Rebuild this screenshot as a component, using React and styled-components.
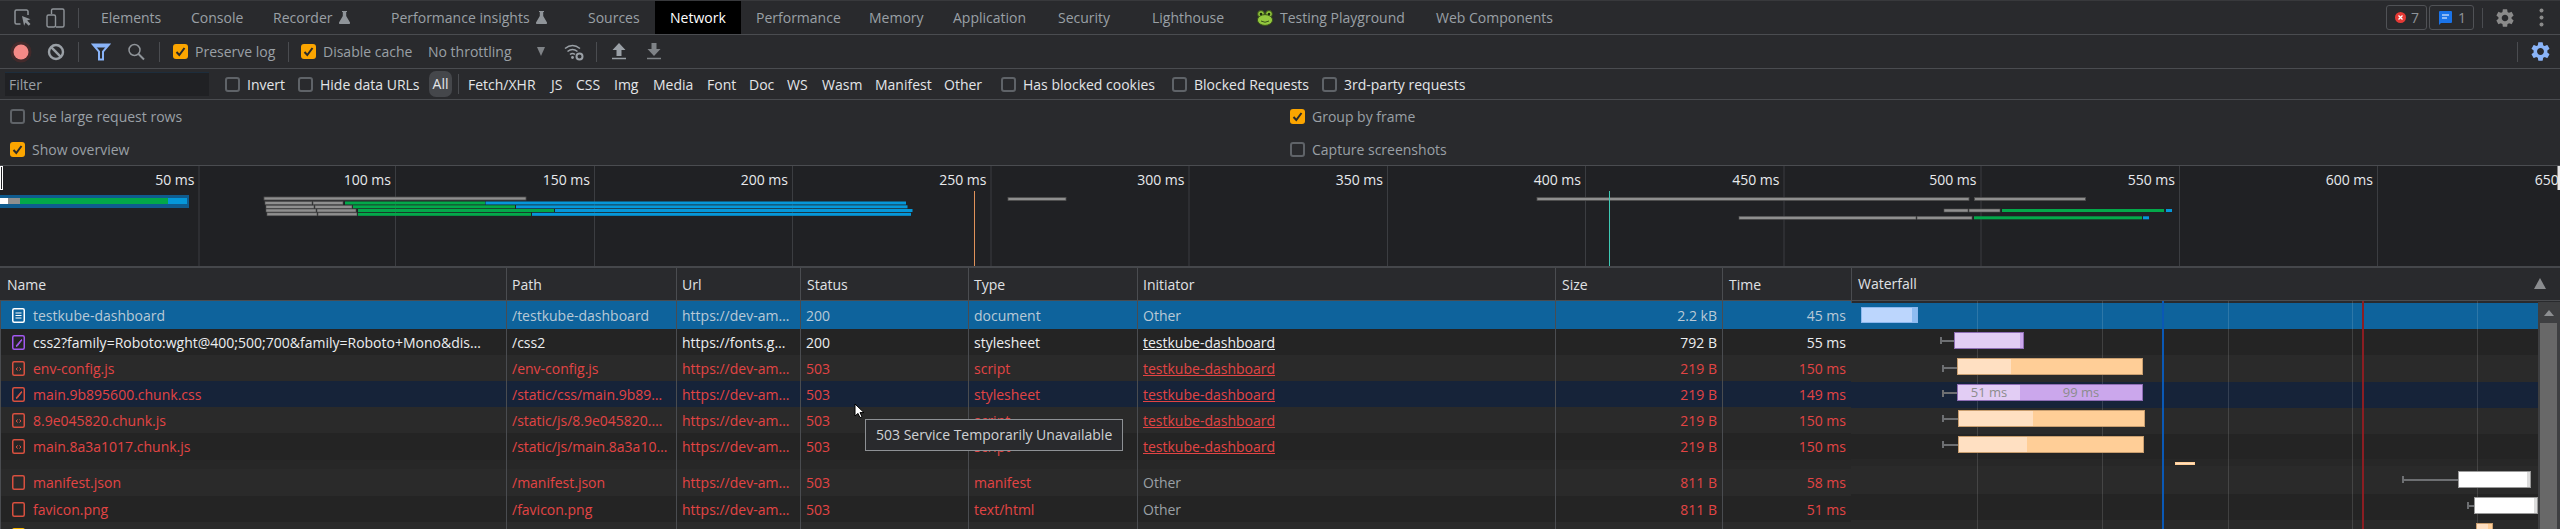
import React from 'react';
import styled, { createGlobalStyle } from 'styled-components';

const FONT = '"Open Sans", "Noto Sans", "Liberation Sans", sans-serif';
const LINE = '#4a4c50';
const RED = '#e24444';

const Global = createGlobalStyle`
  html, body { margin: 0; padding: 0; background: #292a2d; }
  #root { width: 2560px; height: 529px; overflow: hidden; }
  * { box-sizing: border-box; }
`;

const Page = styled.div`
  position: relative;
  width: 2560px;
  height: 529px;
  overflow: hidden;
  background: #292a2d;
  font-family: ${FONT};
  font-size: 14px;
  color: #9aa0a6;
`;
const Bar = styled.div`
  display: flex;
  align-items: center;
  height: ${p => p.$h}px;
  border-bottom: 1px solid ${LINE};
  white-space: nowrap;
`;
const TabBarRow = styled(Bar)`
  border-top: 1px solid #38393c;
`;
const Slot = styled.div`
  flex: none;
  width: ${p => p.$w}px;
  margin-left: ${p => p.$ml || 0}px;
  display: flex;
  align-items: center;
  justify-content: center;
`;
const Sep = styled.div`
  flex: none;
  width: 1px;
  height: 20px;
  margin-left: ${p => p.$ml || 0}px;
  background: ${LINE};
`;
const Tab = styled.div`
  flex: none;
  display: flex;
  align-items: center;
  gap: ${p => p.$gap || 6}px;
  width: ${p => p.$w}px;
  height: 33px;
  padding-left: ${p => p.$pl ?? 15}px;
  color: ${p => (p.$active ? '#fff' : '#9aa0a6')};
  background: ${p => (p.$active ? '#000' : 'transparent')};
`;
const Pushed = styled.div`
  margin-left: auto;
  display: flex;
  align-items: center;
`;
const Badge = styled.div`
  display: flex;
  align-items: center;
  width: ${p => p.$w}px;
  height: 25px;
  margin-right: ${p => p.$mr || 0}px;
  padding-left: ${p => p.$pl}px;
  gap: ${p => p.$gap}px;
  border: 1px solid #505256;
  border-radius: 3px;
  color: #8f9499;
`;
const CheckItem = styled.label`
  flex: none;
  display: flex;
  align-items: center;
  gap: 7px;
  width: ${p => (p.$w ? `${p.$w}px` : 'auto')};
  margin-left: ${p => p.$ml || 0}px;
  color: ${p => p.$c || '#9aa0a6'};
`;
const Box = styled.span`
  flex: none;
  width: 15px;
  height: 15px;
  display: flex;
  align-items: center;
  justify-content: center;
  border-radius: 3px;
  background: ${p => (p.$on ? '#fba500' : 'transparent')};
  border: ${p => (p.$on ? 'none' : '2px solid #5f6368')};
`;
const Throttle = styled.div`
  flex: none;
  width: 106px;
  margin-left: ${p => p.$ml || 0}px;
  color: #9aa0a6;
`;
const Caret = styled.div`
  flex: none;
  width: 0;
  height: 0;
  margin-left: 3px;
  border-left: 4.5px solid transparent;
  border-right: 4.5px solid transparent;
  border-top: 9px solid #7f8387;
`;
const FilterInput = styled.div`
  flex: none;
  width: 204px;
  height: 24px;
  margin: 0 16px 0 5px;
  padding-left: 4px;
  line-height: 23px;
  background: #202124;
  border-top: 1px solid #1d2d3c;
  color: #9aa0a6;
`;
const Pill = styled.div`
  flex: none;
  width: 23px;
  height: 26px;
  line-height: 26px;
  text-align: center;
  border-radius: 7px;
  background: #45474b;
  color: #e3e5e8;
  margin-left: ${p => p.$ml || 0}px;
`;
const TypeFilter = styled.div`
  flex: none;
  width: ${p => p.$w}px;
  color: #e3e5e8;
`;
const Settings = styled.div`
  display: grid;
  grid-template-columns: 1280px auto;
  grid-auto-rows: 33px;
  align-items: center;
  height: 66px;
  padding-left: 10px;
  border-bottom: 1px solid ${LINE};
`;
const Overview = styled.svg`
  display: block;
  width: 2560px;
  height: 102px;
  border-bottom: 2px solid #45474b;
  background: #202124;
  font-family: ${FONT};
  font-size: 14px;
`;
const Columns = styled.div`
  display: grid;
  grid-template-columns: 507px 170px 124px 168px 169px 418px 167px 129px;
`;
const HeaderRow = styled.div`
  display: flex;
  height: 33px;
  border-bottom: 1px solid ${LINE};
  color: #e0e2e5;
`;
const HeadCell = styled.div`
  flex: none;
  display: flex;
  align-items: center;
  width: ${p => p.$w}px;
  height: 100%;
  padding-left: ${p => p.$pl || 5}px;
  border-right: 1px solid ${LINE};
`;
const WaterHead = styled.div`
  flex: 1;
  display: flex;
  align-items: center;
  justify-content: space-between;
  padding: 0 14px 2px 6px;
`;
const SortUp = styled.div`
  width: 0;
  height: 0;
  border-left: 6px solid transparent;
  border-right: 6px solid transparent;
  border-bottom: 11px solid #8a8c8f;
`;
const TableBody = styled.div`
  display: flex;
  height: 228px;
`;
const LeftRows = styled.div`
  flex: none;
  width: 1851px;
`;
const Row = styled(Columns)`
  height: ${p => p.$h}px;
  background: ${p => p.$bg};
  color: ${p => p.$c};
`;
const Cell = styled.div`
  display: flex;
  align-items: center;
  justify-content: ${p => (p.$right ? 'flex-end' : 'flex-start')};
  min-width: 0;
  padding: 0 5px;
  overflow: hidden;
  white-space: nowrap;
  border-right: 1px solid ${LINE};
`;
const NameCell = styled(Cell)`
  padding-left: 11px;
  gap: 8px;
  border-left: 1px solid ${LINE};
`;
const Link = styled.span`
  text-decoration: underline;
`;
const Faded = styled.span`
  color: #9aa0a6;
`;
const WaterColumn = styled.div`
  position: relative;
  flex: none;
  width: 687px;
  overflow: hidden;
  padding-top: 2px;
`;
const Stripe = styled.div`
  height: ${p => p.$h}px;
  background: ${p => p.$bg};
`;
const GridLine = styled.div`
  position: absolute;
  top: 0;
  bottom: 0;
  left: ${p => p.$x - 1851}px;
  width: ${p => p.$wd || 1}px;
  background: ${p => p.$c};
`;
const Span = styled.div`
  position: absolute;
  left: ${p => p.$x - 1851}px;
  top: ${p => p.$y - 301}px;
  width: ${p => p.$w}px;
  height: ${p => p.$h || 17}px;
  display: flex;
  border: 1px solid ${p => p.$b};
  overflow: hidden;
`;
const Seg = styled.div`
  flex: ${p => (p.$w ? `0 0 ${p.$w}px` : '1')};
  background: ${p => p.$c};
  color: #8c8c8c;
  font-size: 13px;
  line-height: 15px;
  text-align: center;
`;
const Whisker = styled.div`
  position: absolute;
  left: ${p => p.$x - 1851}px;
  top: ${p => p.$y - 301 - 3}px;
  width: ${p => p.$w}px;
  height: 7px;
  border-left: 2px solid #6d6f72;
  &::after {
    content: '';
    display: block;
    margin-top: 2.5px;
    height: 2px;
    background: #6d6f72;
  }
`;
const Scroll = styled.div`
  flex: none;
  width: 22px;
  height: 228px;
  margin-top: 1px;
  background: #3e3f41;
  padding-left: 2px;
`;
const ScrollUp = styled.div`
  height: 21px;
  display: flex;
  align-items: center;
  justify-content: center;
  padding-right: 3px;
  &::before {
    content: '';
    border-left: 5px solid transparent;
    border-right: 5px solid transparent;
    border-bottom: 6px solid #8d8f91;
  }
`;
const Thumb = styled.div`
  width: 17px;
  height: 206px;
  background: #686868;
`;
const Tooltip = styled.div`
  position: absolute;
  left: 865px;
  top: 419px;
  width: 258px;
  height: 32px;
  padding-left: 10px;
  line-height: 30px;
  background: #292a2d;
  border: 1px solid #8d9094;
  color: #d0d2d5;
  white-space: nowrap;
`;
const Cursor = styled.svg`
  position: absolute;
  left: 854px;
  top: 403px;
`;
const InlineIcon = styled.svg`
  flex: none;
`;

const GEAR = 'M19.14 12.94c.04-.3.06-.61.06-.94 0-.32-.02-.64-.07-.94l2.03-1.58a.49.49 0 0 0 .12-.61l-1.92-3.32a.488.488 0 0 0-.59-.22l-2.39.96c-.5-.38-1.03-.7-1.62-.94l-.36-2.54a.484.484 0 0 0-.48-.41h-3.84c-.24 0-.43.17-.47.41l-.36 2.54c-.59.24-1.13.57-1.62.94l-2.39-.96c-.22-.08-.47 0-.59.22L2.74 8.87c-.12.21-.08.47.12.61l2.03 1.58c-.05.3-.09.63-.09.94s.02.64.07.94l-2.03 1.58a.49.49 0 0 0-.12.61l1.92 3.32c.12.22.37.29.59.22l2.39-.96c.5.38 1.03.7 1.62.94l.36 2.54c.05.24.24.41.48.41h3.84c.24 0 .44-.17.47-.41l.36-2.54c.59-.24 1.13-.56 1.62-.94l2.39.96c.22.08.47 0 .59-.22l1.92-3.32c.12-.22.07-.47-.12-.61l-2.01-1.58zM12 15.6c-1.98 0-3.6-1.62-3.6-3.6s1.62-3.6 3.6-3.6 3.6 1.62 3.6 3.6-1.62 3.6-3.6 3.6z';

const Gear = ({ color, size = 24 }) => (
  <svg width={size} height={size} viewBox="0 0 24 24"><path fill={color} d={GEAR} /></svg>
);
const Flask = () => (
  <svg width="11" height="13" viewBox="0 0 11 13">
    <path fill="#8f9499" d="M3 0h5v1h-.8v4L11 11.4a1 1 0 0 1-.9 1.6H.9A1 1 0 0 1 0 11.4L3.8 5V1H3z" />
  </svg>
);
const Frog = () => (
  <svg width="18" height="16" viewBox="0 0 18 16">
    <circle cx="5" cy="4" r="3.4" fill="#93c83e" stroke="#39511a" strokeWidth="1" />
    <circle cx="13" cy="4" r="3.4" fill="#93c83e" stroke="#39511a" strokeWidth="1" />
    <ellipse cx="9" cy="10" rx="7.6" ry="5.4" fill="#93c83e" stroke="#39511a" strokeWidth="1" />
    <circle cx="5" cy="4" r="1.3" fill="#1d2a0c" />
    <circle cx="13" cy="4" r="1.3" fill="#1d2a0c" />
    <path d="M5 11q4 2.5 8 0" stroke="#39511a" strokeWidth="1" fill="none" />
  </svg>
);
const Check = ({ on }) => (
  <Box $on={on}>
    {on && (
      <svg width="11" height="11" viewBox="0 0 11 11">
        <path d="M1.5 6l2.8 3L9.5 2" fill="none" stroke="#2a2a2a" strokeWidth="2" />
      </svg>
    )}
  </Box>
);
const Checked = ({ on, label, w, ml, c }) => (
  <CheckItem $w={w} $ml={ml} $c={c}>
    <Check on={on} />
    {label}
  </CheckItem>
);

const FileIcon = ({ kind, color }) => {
  const glyph = {
    doc: <path d="M3.5 5h6M3.5 7.5h6M3.5 10h6" stroke={color} strokeWidth="1.2" />,
    css: <path d="M4 11l5.5-6.5L10 5l-5 6.5z" fill={color} stroke={color} strokeWidth="1" />,
    js: <path d="M5.8 6.5L4 8l1.8 1.5M7.4 6.5L9 8l-1.6 1.5" fill="none" stroke={color} strokeWidth="1" />,
    blank: null,
  }[kind];
  return (
    <InlineIcon width="13" height="15" viewBox="0 0 13 15">
      <rect x="0.75" y="0.75" width="11.5" height="13.5" rx="1.5" fill="none" stroke={color} strokeWidth="1.5" />
      {glyph}
    </InlineIcon>
  );
};

const tabs = [
  { label: 'Elements', w: 90 },
  { label: 'Console', w: 82 },
  { label: 'Recorder', w: 118, flask: true },
  { label: 'Performance insights', w: 197, flask: true },
  { label: 'Sources', w: 82 },
  { label: 'Network', w: 86, active: true },
  { label: 'Performance', w: 113 },
  { label: 'Memory', w: 84 },
  { label: 'Application', w: 105 },
  { label: 'Security', w: 94 },
  { label: 'Lighthouse', w: 103 },
  { label: 'Testing Playground', w: 181, frog: true },
  { label: 'Web Components', w: 150 },
];
const typeFilters = [
  ['Fetch/XHR', 83], ['JS', 25], ['CSS', 38], ['Img', 39], ['Media', 54], ['Font', 42],
  ['Doc', 38], ['WS', 35], ['Wasm', 53], ['Manifest', 69], ['Other', 57],
];
const TICKS = [198.5, 395, 594, 792, 990.5, 1188.5, 1387, 1585, 1783.5, 1980.5, 2179, 2377];

const GRAY = '#8f8f8f', GREEN = '#03a84a', BLUE = '#0597d9';
const track = (y, parts) =>
  parts.map(([a, b, c], i) => <rect key={`${y}-${i}`} x={a} y={y} width={b - a} height={3} fill={c} stroke={c === GRAY ? '#4e4e4e' : '#17351f'} strokeWidth={c === GRAY ? 0.6 : 0} />);

const OverviewChart = () => (
  <Overview viewBox="0 166 2560 100" preserveAspectRatio="none">
    {TICKS.map(x => <rect key={x} x={x} y="166" width="1" height="100" fill="#3b3d41" />)}
    {[...TICKS, 2586].map((x, i) => (
      <text key={x} x={x - 4} y="185" textAnchor="end" fill="#e8eaed">{(i + 1) * 50} ms</text>
    ))}
    <rect x="0" y="195" width="189" height="13" fill="#0f5c8f" />
    <rect x="0" y="198" width="8" height="6" fill="#fff" />
    <rect x="8" y="198" width="12" height="6" fill={GRAY} />
    <rect x="20" y="198" width="148" height="6" fill={GREEN} />
    <rect x="168" y="198" width="19" height="6" fill={BLUE} />
    <rect x="264" y="197" width="262" height="3" fill={GRAY} stroke="#4e4e4e" strokeWidth="0.8" />
    {track(201.5, [[265, 312, GRAY], [313, 343, GRAY], [345, 485, GREEN], [485.5, 906, BLUE]])}
    {track(205.3, [[266, 314, GRAY], [315, 352, GRAY], [353, 515, GREEN], [516, 907.5, BLUE]])}
    {track(209, [[266, 316, GRAY], [317, 356, GRAY], [358, 554, GREEN], [555, 912.5, BLUE]])}
    {track(212.8, [[267, 317, GRAY], [318, 357, GRAY], [358, 531, GREEN], [532, 911, BLUE]])}
    <rect x="1008" y="197.5" width="58" height="3" fill={GRAY} stroke="#4e4e4e" strokeWidth="0.8" />
    <rect x="1537" y="197.5" width="432" height="3" fill={GRAY} stroke="#4e4e4e" strokeWidth="0.8" />
    <rect x="1974.5" y="197.5" width="111" height="3" fill={GRAY} stroke="#4e4e4e" strokeWidth="0.8" />
    {track(209, [[1944, 1968, GRAY], [1969, 2000, GRAY], [2002, 2164, GREEN], [2166, 2172, BLUE]])}
    {track(216.3, [[1739, 1916, GRAY], [1917, 1972, GRAY], [1974, 2142, GREEN], [2143, 2149, BLUE]])}
    <rect x="974" y="191" width="1" height="75" fill="#e0925a" />
    <rect x="1609" y="191" width="1" height="75" fill="#3fc9b4" />
    <path d="M0 166h3v24H0z" fill="#fff" />
    <path d="M1 167h1v22H1z" fill="#202124" />
    <rect x="2557.5" y="166" width="2.5" height="24" fill="#e8e8e8" />
  </Overview>
);

const SEL = { bg: '#0e639c', c: '#b9c9d6' };
const DARK = '#242424', LIGHT = '#2a2a2a', HOVER = '#162339';
const DOTS = 'https://dev-am…';
const rows = [
  { h: 28, ...SEL, kind: 'doc', ic: '#fff', name: 'testkube-dashboard', path: '/testkube-dashboard', url: DOTS, st: '200', type: 'document', init: 'Other', size: '2.2 kB', time: '45 ms' },
  { h: 26, bg: DARK, c: '#eceef0', kind: 'css', ic: '#a259f0', name: 'css2?family=Roboto:wght@400;500;700&family=Roboto+Mono&dis…', path: '/css2', url: 'https://fonts.g…', st: '200', type: 'stylesheet', link: true, size: '792 B', time: '55 ms' },
  { h: 26, bg: LIGHT, c: RED, kind: 'js', ic: '#d8503f', name: 'env-config.js', path: '/env-config.js', url: DOTS, st: '503', type: 'script', link: true, size: '219 B', time: '150 ms' },
  { h: 26, bg: HOVER, c: RED, kind: 'css', ic: '#d8503f', name: 'main.9b895600.chunk.css', path: '/static/css/main.9b89…', url: DOTS, st: '503', type: 'stylesheet', link: true, size: '219 B', time: '149 ms' },
  { h: 26, bg: LIGHT, c: RED, kind: 'js', ic: '#d8503f', name: '8.9e045820.chunk.js', path: '/static/js/8.9e045820.…', url: DOTS, st: '503', type: 'script', link: true, size: '219 B', time: '150 ms' },
  { h: 27, bg: DARK, c: RED, kind: 'js', ic: '#d8503f', name: 'main.8a3a1017.chunk.js', path: '/static/js/main.8a3a10…', url: DOTS, st: '503', type: 'script', link: true, size: '219 B', time: '150 ms' },
  { h: 9, bg: '#272727' },
  { h: 27, bg: LIGHT, c: RED, kind: 'blank', ic: '#d8503f', name: 'manifest.json', path: '/manifest.json', url: DOTS, st: '503', type: 'manifest', other: true, size: '811 B', time: '58 ms' },
  { h: 26, bg: DARK, c: RED, kind: 'blank', ic: '#d8503f', name: 'favicon.png', path: '/favicon.png', url: DOTS, st: '503', type: 'text/html', other: true, size: '811 B', time: '51 ms' },
  { h: 26, bg: LIGHT, c: RED, kind: 'blank', ic: '#f5b400' },
];
const stripes = [
  [26, SEL.bg], [26, DARK], [26.5, LIGHT], [26, HOVER], [26, LIGHT], [25.5, DARK], [7, '#272727'], [27.5, LIGHT], [26, DARK], [10, LIGHT],
];
const headers = [
  ['Name', 507, 7], ['Path', 170], ['Url', 124], ['Status', 168, 6], ['Type', 169], ['Initiator', 418], ['Size', 167, 6], ['Time', 129, 6],
];
const ORANGE = ['#ffe0c2', '#ffce97', '#c99e6f'];
const PURPLE = ['#e2cdf4', '#cba7ec', '#8e6db5'];
const BRIGHT = '#e3e5e8';

const App = () => (
  <Page>
    <Global />
    <TabBarRow $h={35}>
      <Slot $w={14} />
      <InlineIcon width="18" height="18" viewBox="0 0 18 18">
        <path d="M6.5 15H2.5A1.5 1.5 0 0 1 1 13.5v-11A1.5 1.5 0 0 1 2.5 1h10A1.5 1.5 0 0 1 14 2.5V6" fill="none" stroke="#8f9499" strokeWidth="1.5" />
        <path d="M8 7l8.5 3.2-3.3 1.4 3.3 3.3-1.8 1.8-3.2-3.3-1.4 3.3z" fill="#8f9499" />
      </InlineIcon>
      <Slot $w={14} />
      <InlineIcon width="19" height="20" viewBox="0 0 19 20">
        <path d="M5.5 6V2.5A1.5 1.5 0 0 1 7 1h9.5A1.5 1.5 0 0 1 18 2.5v15a1.5 1.5 0 0 1-1.5 1.5H10" fill="none" stroke="#8f9499" strokeWidth="1.4" />
        <rect x="1" y="7" width="8.5" height="12" rx="1.5" fill="none" stroke="#8f9499" strokeWidth="1.4" />
      </InlineIcon>
      <Sep $ml={13} />
      <Slot $w={7} />
      {tabs.map(t => (
        <Tab key={t.label} $w={t.w} $active={t.active} $pl={t.frog ? 16 : 15}>
          {t.frog && <Frog />}
          {t.label}
          {t.flask && <Flask />}
        </Tab>
      ))}
      <Pushed>
        <Badge $w={41} $mr={2} $pl={8} $gap={5}>
          <svg width="11" height="11" viewBox="0 0 11 11">
            <circle cx="5.5" cy="5.5" r="5.5" fill="#e53935" />
            <path d="M3.5 3.5l4 4M7.5 3.5l-4 4" stroke="#fff" strokeWidth="1.3" />
          </svg>
          7
        </Badge>
        <Badge $w={45} $pl={9} $gap={6}>
          <svg width="13" height="14" viewBox="0 0 13 14">
            <path d="M0 1a1 1 0 0 1 1-1h11a1 1 0 0 1 1 1v10a1 1 0 0 1-1 1H2l-2 2z" fill="#1a73e8" />
            <path d="M3 4h7M3 7h5" stroke="#fff" strokeWidth="1.2" />
          </svg>
          1
        </Badge>
        <Sep $ml={8} />
        <Slot $w={30} $ml={7}><Gear color="#8a8a8a" size={22} /></Slot>
        <Slot $w={30} $ml={6}>
          <svg width="5" height="19" viewBox="0 0 5 19">
            <circle cx="2.5" cy="2.5" r="2" fill="#8a8a8a" />
            <circle cx="2.5" cy="9.5" r="2" fill="#8a8a8a" />
            <circle cx="2.5" cy="16.5" r="2" fill="#8a8a8a" />
          </svg>
        </Slot>
        <Slot $w={4} />
      </Pushed>
    </TabBarRow>

    <Bar $h={34}>
      <Slot $w={41}>
        <svg width="24" height="24" viewBox="0 0 24 24">
          <circle cx="12" cy="12" r="10.5" fill="#5a2a2a" opacity="0.55" />
          <circle cx="12" cy="12" r="7.5" fill="#f58a87" />
        </svg>
      </Slot>
      <Slot $w={30}>
        <svg width="18" height="18" viewBox="0 0 18 18">
          <circle cx="9" cy="9" r="7" fill="none" stroke="#9aa0a6" strokeWidth="2.4" />
          <path d="M4.2 4.2l9.6 9.6" stroke="#9aa0a6" strokeWidth="2.4" />
        </svg>
      </Slot>
      <Sep $ml={7} />
      <Slot $w={44}>
        <svg width="20" height="18" viewBox="0 0 20 18">
          <path d="M2 1.5h16l-6 7v8h-4v-8z" fill="none" stroke="#8ab4f8" strokeWidth="2" />
          <path d="M2 1.5h16l-2.5 3h-11z" fill="#8ab4f8" />
        </svg>
      </Slot>
      <Slot $w={26}>
        <svg width="18" height="18" viewBox="0 0 18 18">
          <circle cx="7.5" cy="7" r="5.5" fill="none" stroke="#8f9499" strokeWidth="1.5" />
          <path d="M11.5 11l5.5 5.5" stroke="#8f9499" strokeWidth="2" />
        </svg>
      </Slot>
      <Sep $ml={10} />
      <Checked on label="Preserve log" w={115} ml={13} />
      <Sep />
      <Checked on label="Disable cache" w={127} ml={12} />
      <Throttle>No throttling</Throttle>
      <Caret />
      <Slot $w={32} $ml={13}>
        <svg width="20" height="20" viewBox="0 0 20 20">
          <path d="M1 6.5q7.5-6 15 0M3.5 9.5q5-4 10 0M6 12.5q2.5-2 5 0" fill="none" stroke="#9aa0a6" strokeWidth="1.6" />
          <circle cx="8.5" cy="15.5" r="1.4" fill="#9aa0a6" />
          <circle cx="15.5" cy="14.5" r="3" fill="none" stroke="#9aa0a6" strokeWidth="2" />
        </svg>
      </Slot>
      <Sep $ml={6} />
      <Slot $w={44}>
        <svg width="14" height="17" viewBox="0 0 14 17">
          <path d="M7 0l6.5 7H9.5v6h-5V7H.5z" fill="#9aa0a6" />
          <path d="M0 15.5h14" stroke="#9aa0a6" strokeWidth="1.5" />
        </svg>
      </Slot>
      <Slot $w={26}>
        <svg width="14" height="17" viewBox="0 0 14 17">
          <path d="M4.5 0h5v6h4L7 13 .5 6h4z" fill="#7f8387" />
          <path d="M0 15.5h14" stroke="#7f8387" strokeWidth="1.5" />
        </svg>
      </Slot>
      <Pushed>
        <Sep />
        <Slot $w={30} $ml={7}><Gear color="#8ab4f8" size={23} /></Slot>
        <Slot $w={5} />
      </Pushed>
    </Bar>

    <Bar $h={31}>
      <FilterInput>Filter</FilterInput>
      <Checked label="Invert" w={73} c={BRIGHT} />
      <Checked label="Hide data URLs" w={131} c={BRIGHT} />
      <Pill>All</Pill>
      <Sep $ml={6} />
      <Slot $w={9} />
      {typeFilters.map(([label, w]) => <TypeFilter key={label} $w={w}>{label}</TypeFilter>)}
      <Checked label="Has blocked cookies" w={171} c={BRIGHT} />
      <Checked label="Blocked Requests" w={150} c={BRIGHT} />
      <Checked label="3rd-party requests" c={BRIGHT} />
    </Bar>

    <Settings>
      <Checked label="Use large request rows" />
      <Checked on label="Group by frame" />
      <Checked on label="Show overview" />
      <Checked label="Capture screenshots" />
    </Settings>

    <OverviewChart />

    <HeaderRow>
      {headers.map(([label, w, pl]) => (
        <HeadCell key={label} $pl={pl} $w={w}>{label}</HeadCell>
      ))}
      <WaterHead>Waterfall<SortUp /></WaterHead>
    </HeaderRow>

    <TableBody>
      <LeftRows>
        {rows.map((r, i) => (
          <Row key={i} $h={r.h} $bg={r.bg} $c={r.c}>
            <NameCell>
              {r.kind && <FileIcon kind={r.kind} color={r.ic} />}
              {r.name}
            </NameCell>
            <Cell>{r.path}</Cell>
            <Cell>{r.url}</Cell>
            <Cell>{r.st}</Cell>
            <Cell>{r.type}</Cell>
            <Cell>
              {r.link && <Link>testkube-dashboard</Link>}
              {r.other && <Faded>Other</Faded>}
              {i === 0 && 'Other'}
            </Cell>
            <Cell $right>{r.size}</Cell>
            <Cell $right>{r.time}</Cell>
          </Row>
        ))}
      </LeftRows>
      <WaterColumn>
        {stripes.map(([h, bg], i) => <Stripe key={i} $h={h} $bg={bg} />)}
        {[1977, 2102, 2227.5, 2352, 2477].map(x => <GridLine key={x} $x={x} $c="rgba(255,255,255,0.13)" />)}
        <GridLine $x={2162} $wd={2} $c="#0a58b5" />
        <GridLine $x={2361.5} $wd={2} $c="#8b1d22" />

        <Span $x={1860.5} $y={306.5} $w={57} $h={16} $b="#8cb8ee">
          <Seg $c="#bcd6fd" /><Seg $w={5} $c="#8ebcf1" />
        </Span>

        <Whisker $x={1940} $y={340} $w={14} />
        <Span $x={1954} $y={332} $w={70} $b={PURPLE[2]}>
          <Seg $c={PURPLE[0]} /><Seg $w={3} $c={PURPLE[1]} />
        </Span>

        <Whisker $x={1942} $y={367.5} $w={15} />
        <Span $x={1957} $y={358} $w={186} $b={ORANGE[2]}>
          <Seg $w={53} $c={ORANGE[0]} /><Seg $c={ORANGE[1]} />
        </Span>

        <Whisker $x={1942} $y={392.5} $w={15} />
        <Span $x={1957} $y={384} $w={186} $b={PURPLE[2]}>
          <Seg $w={62} $c={PURPLE[0]}>51 ms</Seg><Seg $c={PURPLE[1]}>99 ms</Seg>
        </Span>

        <Whisker $x={1942} $y={418} $w={16} />
        <Span $x={1958} $y={410} $w={187} $b={ORANGE[2]}>
          <Seg $w={74} $c={ORANGE[0]} /><Seg $c={ORANGE[1]} />
        </Span>

        <Whisker $x={1942} $y={444} $w={16} />
        <Span $x={1958} $y={436} $w={186} $b={ORANGE[2]}>
          <Seg $w={68} $c={ORANGE[0]} /><Seg $c={ORANGE[1]} />
        </Span>

        <Span $x={2174.5} $y={462} $w={20} $h={3} $b={ORANGE[1]}>
          <Seg $c={ORANGE[0]} />
        </Span>

        <Whisker $x={2402} $y={479} $w={56} />
        <Span $x={2458} $y={471} $w={73} $b="#9a9a9a">
          <Seg $c="#fff" /><Seg $w={3} $c="#dcdcdc" />
        </Span>

        <Whisker $x={2467} $y={505} $w={7} />
        <Span $x={2474} $y={497} $w={64} $b="#9a9a9a">
          <Seg $c="#fff" /><Seg $w={3} $c="#dcdcdc" />
        </Span>

        <Span $x={2475.5} $y={523} $w={17} $h={8} $b={ORANGE[2]}>
          <Seg $c={ORANGE[0]} /><Seg $w={4} $c={ORANGE[1]} />
        </Span>
      </WaterColumn>
      <Scroll>
        <ScrollUp />
        <Thumb />
      </Scroll>
    </TableBody>

    <Tooltip>503 Service Temporarily Unavailable</Tooltip>
    <Cursor width="11" height="16" viewBox="0 0 11 16">
      <path d="M1 1v12l3-2.6 2 4.3 2-1-2-4.1h4z" fill="#fff" stroke="#000" strokeWidth="1" />
    </Cursor>
  </Page>
);

export default App;
